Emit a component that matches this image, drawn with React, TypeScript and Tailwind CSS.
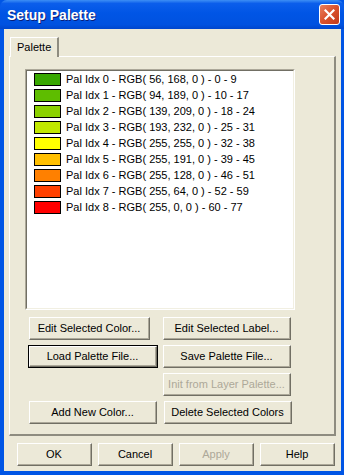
import React from 'react';

const rows = [
  { color: '#38A800', label: 'Pal Idx 0 - RGB( 56, 168, 0 ) - 0 - 9' },
  { color: '#5EBD00', label: 'Pal Idx 1 - RGB( 94, 189, 0 ) - 10 - 17' },
  { color: '#8BD100', label: 'Pal Idx 2 - RGB( 139, 209, 0 ) - 18 - 24' },
  { color: '#C1E800', label: 'Pal Idx 3 - RGB( 193, 232, 0 ) - 25 - 31' },
  { color: '#FFFF00', label: 'Pal Idx 4 - RGB( 255, 255, 0 ) - 32 - 38' },
  { color: '#FFBF00', label: 'Pal Idx 5 - RGB( 255, 191, 0 ) - 39 - 45' },
  { color: '#FF8000', label: 'Pal Idx 6 - RGB( 255, 128, 0 ) - 46 - 51' },
  { color: '#FF4000', label: 'Pal Idx 7 - RGB( 255, 64, 0 ) - 52 - 59' },
  { color: '#FF0000', label: 'Pal Idx 8 - RGB( 255, 0, 0 ) - 60 - 77' },
];

const Btn: React.FC<{ label: string; w: string; disabled?: boolean; focus?: boolean }> = ({ label, w, disabled, focus }) => (
  <div className={`${w} h-[23px] ${focus ? 'border border-black' : ''}`}>
    <div className="h-full w-full border-t border-l border-white border-r border-b border-r-[#716F64] border-b-[#716F64]">
      <div className="h-full w-full border-r border-b border-[#ACA899] bg-[#ECE9D8] flex items-center justify-center">
        <span className={disabled ? 'text-[#ACA899]' : 'text-black'}>{label}</span>
      </div>
    </div>
  </div>
);

export default function App() {
  return (
    <div
      className="w-[344px] h-[475px] flex flex-col bg-[#0055E5] text-[11px] leading-none text-black"
      style={{ fontFamily: '"Liberation Sans", Arial, sans-serif' }}
    >
      {/* title bar */}
      <div className="h-[29px] shrink-0 flex items-center justify-between pl-[7px] pr-[4px] bg-[linear-gradient(to_bottom,#3D8FF5_0%,#0B5EEB_12%,#0055E5_45%,#0052E0_85%,#0046CC_100%)] rounded-t-[7px]">
        <span className="text-white font-bold text-[14px] [text-shadow:1px_1px_0_#0A1E78]">
          Setup Palette
        </span>
        <div className="w-[21px] h-[21px] rounded-[3px] border border-white bg-[linear-gradient(135deg,#E9805F_0%,#D9512C_50%,#C2391A_100%)] flex items-center justify-center">
          <svg width="11" height="11" viewBox="0 0 11 11">
            <path d="M1.5 1.5 L9.5 9.5 M9.5 1.5 L1.5 9.5" stroke="white" strokeWidth="2.2" strokeLinecap="square" />
          </svg>
        </div>
      </div>

      {/* body */}
      <div className="flex-1 ml-[4px] mr-[3px] mb-[4px] bg-[#ECE9D8] flex flex-col pl-[5px] pr-[5px]">
        {/* tab strip */}
        <div className="h-[27px] flex items-end pl-[1px]">
          <div className="w-[49px] h-[20px] relative top-[1px] z-10 bg-[#ECE9D8] border-t border-l border-white border-r-2 border-r-[#8E8C80] flex items-center pl-[6px] pb-[1px]">
            Palette
          </div>
        </div>

        {/* tab panel */}
        <div className="h-[380px] border-t border-l border-white border-r-2 border-b-2 border-r-[#8E8C80] border-b-[#8E8C80] flex flex-col">
          <div className="pl-[15px] pt-[12px]">
            <div className="w-[270px] h-[241px] border-t border-l border-[#ACA899] border-r border-b border-r-white border-b-white">
              <div className="h-full w-full border-t border-l border-[#716F64] border-r border-b border-r-[#F1EFE2] border-b-[#F1EFE2] bg-white pl-[7px] flex flex-col">
                {rows.map((r) => (
                  <div key={r.label} className="h-[16px] flex items-center gap-[5px]">
                    <div className="w-[27px] h-[13px] border border-black" style={{ background: r.color }} />
                    <span className="whitespace-pre">{r.label}</span>
                  </div>
                ))}
              </div>
            </div>
          </div>

          <div className="grid grid-cols-[135px_128px] gap-y-[5px] pl-[18px] pt-[7px]">
            <div className="pl-[1px]"><Btn label="Edit Selected Color..." w="w-[121px]" /></div>
            <Btn label="Edit Selected Label..." w="w-[128px]" />
            <Btn label="Load Palette File..." w="w-[130px]" focus />
            <Btn label="Save Palette File..." w="w-[128px]" />
            <div />
            <Btn label="Init from Layer Palette..." w="w-[128px]" disabled />
            <div className="pl-[1px]"><Btn label="Add New Color..." w="w-[128px]" /></div>
            <div className="pl-[1px]"><Btn label="Delete Selected Colors" w="w-[128px]" /></div>
          </div>
        </div>

        {/* bottom buttons */}
        <div className="flex pt-[7px] pl-[8px] gap-[6px]">
          <Btn label="OK" w="w-[75px]" />
          <Btn label="Cancel" w="w-[75px]" />
          <Btn label="Apply" w="w-[75px]" disabled />
          <Btn label="Help" w="w-[75px]" />
        </div>
      </div>
    </div>
  );
}
